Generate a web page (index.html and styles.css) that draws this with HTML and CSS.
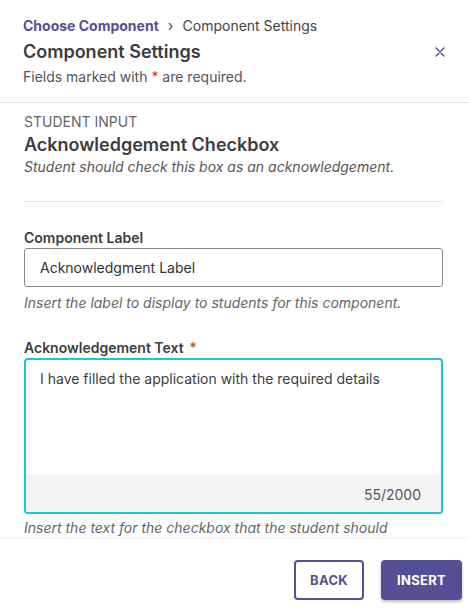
FILE: index.html
```html
<!DOCTYPE html>
<html lang="en">
<head>
<meta charset="utf-8">
<title>Component Settings</title>
<link rel="stylesheet" href="styles.css">
</head>
<body>
<div class="panel">
  <header class="header">
    <nav class="crumbs">
      <span class="crumb-link">Choose Component</span>
      <span class="crumb-sep">&#x203A;</span>
      <span class="crumb-current">Component Settings</span>
    </nav>
    <div class="title-row">
      <h1 class="title">Component Settings</h1>
      <button class="close" aria-label="Close">
        <svg width="10" height="10" viewBox="0 0 10 10"><path d="M1 1 L9 9 M9 1 L1 9" stroke="#574f93" stroke-width="1.4" fill="none" stroke-linecap="round"/></svg>
      </button>
    </div>
    <p class="required-note">Fields marked with <span class="star">*</span> are required.</p>
  </header>

  <main class="content">
    <div class="kind">STUDENT INPUT</div>
    <h2 class="comp-name">Acknowledgement Checkbox</h2>
    <p class="comp-desc">Student should check this box as an acknowledgement.</p>
    <hr class="divider">

    <div class="field">
      <label class="label">Component Label</label>
      <div class="input">Acknowledgment Label</div>
      <p class="help">Insert the label to display to students for this component.</p>
    </div>

    <div class="field field-second">
      <label class="label">Acknowledgement Text <span class="star star-label">*</span></label>
      <div class="textarea">
        <div class="textarea-text">I have filled the application with the required details</div>
        <div class="textarea-foot">55/2000</div>
      </div>
      <p class="help">Insert the text for the checkbox that the student should</p>
    </div>
  </main>

  <footer class="footer">
    <button class="btn btn-outline">BACK</button>
    <button class="btn btn-primary">INSERT</button>
  </footer>
</div>
</body>
</html>
```

FILE: styles.css
```css
* { box-sizing: border-box; }
html, body { margin: 0; padding: 0; height: 100%; }
body {
  font-family: "Inter", "Noto Sans", sans-serif;
  color: #3d3d3d;
  background: #fff;
}
.panel {
  display: flex;
  flex-direction: column;
  height: 611px;
  overflow: hidden;
}
.header {
  padding: 16px 23px 15px 23px;
  border-bottom: 1px solid #e4e4e4;
  flex: none;
}
.crumbs {
  display: flex;
  align-items: center;
  font-size: 14px;
  line-height: 20px;
  height: 20px;
}
.crumb-link { color: #574f93; font-weight: 700; }
.crumb-sep { color: #555; margin: 0 9px 0 9px; font-size: 15px; }
.crumb-current { color: #444; }
.title-row {
  display: flex;
  align-items: center;
  justify-content: space-between;
  margin-top: 4px;
  height: 24px;
}
.title {
  margin: 0;
  font-size: 18px;
  line-height: 24px;
  font-weight: 600;
  color: #3c3c3c;
}
.close {
  border: 0;
  background: none;
  padding: 0;
  margin-right: 1px;
  width: 10px;
  height: 10px;
  display: flex;
}
.required-note {
  margin: 3px 0 0 0;
  font-size: 14px;
  line-height: 20px;
  color: #555;
}
.star { color: #d0363c; }
.content {
  flex: 1;
  overflow: hidden;
  padding: 9px 26px 0 24px;
}
.kind {
  font-size: 14px;
  line-height: 20px;
  color: #666;
  font-weight: 400;
}
.comp-name {
  margin: 1px 0 0 0;
  font-size: 18px;
  line-height: 24px;
  font-weight: 600;
  color: #3d3d3d;
}
.comp-desc {
  margin: 0;
  font-size: 14px;
  line-height: 20px;
  font-style: italic;
  color: #555;
}
.divider {
  border: 0;
  border-top: 1px solid #e4e4e4;
  margin: 24px 0 0 0;
}
.field { margin-top: 26px; }
.field-second { margin-top: 25px; }
.label {
  display: block;
  font-size: 14px;
  line-height: 20px;
  font-weight: 600;
  color: #3d3d3d;
}
.star-label { color: #d4572a; margin-left: 2px; }
.input {
  margin-top: 0;
  height: 39px;
  border: 1px solid #8a8a8a;
  border-radius: 3px;
  padding: 0 15px;
  display: flex;
  align-items: center;
  font-size: 14px;
  color: #333;
}
.help {
  margin: 6px 0 0 0;
  font-size: 14px;
  line-height: 20px;
  font-style: italic;
  color: #666;
}
.field-second .help { margin-top: 4px; }
.textarea {
  margin-top: 0;
  height: 156px;
  border: 2px solid #1fc5d3;
  border-radius: 4px;
  display: flex;
  flex-direction: column;
  overflow: hidden;
}
.textarea-text {
  flex: 1;
  padding: 9px 14px;
  font-size: 14px;
  line-height: 20px;
  color: #3d3d3d;
}
.textarea-foot {
  height: 37px;
  background: #f4f4f4;
  display: flex;
  align-items: center;
  justify-content: flex-end;
  padding-right: 20px;
  padding-top: 1px;
  font-size: 14px;
  color: #555;
}
.footer {
  flex: none;
  height: 72px;
  display: flex;
  justify-content: flex-end;
  align-items: flex-start;
  gap: 17px;
  padding: 21px 7px 0 0;
  background: #fff;
  box-shadow: 0 -2px 4px rgba(0,0,0,0.06);
  position: relative;
}
.btn {
  height: 40px;
  border-radius: 4px;
  font-family: "Inter", "Roboto", sans-serif;
  font-size: 13px;
  font-weight: 700;
  letter-spacing: 0.3px;
  cursor: pointer;
}
.btn-outline {
  width: 70px;
  background: #fff;
  color: #574f93;
  border: 2px solid #574f93;
}
.btn-primary {
  width: 81px;
  background: #574f93;
  color: #fff;
  border: 0;
  box-shadow: 0 2px 3px rgba(0,0,0,0.25);
}
```
